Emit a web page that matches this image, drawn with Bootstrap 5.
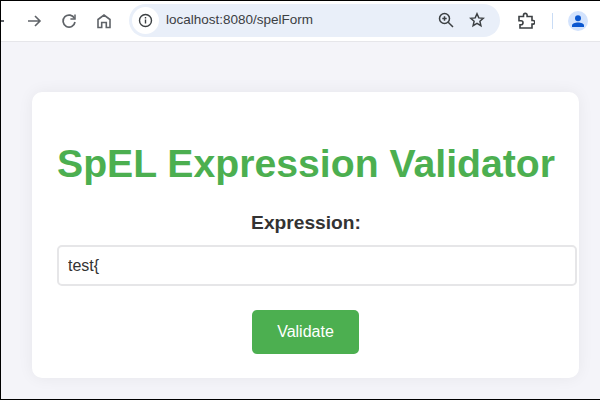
<!DOCTYPE html>
<html lang="en">
<head>
  <meta charset="UTF-8" />
  <meta name="viewport" content="width=device-width, initial-scale=1" />
  <title>SpEL Expression Validator</title>
  <link href="https://cdn.jsdelivr.net/npm/bootstrap@5.3.3/dist/css/bootstrap.min.css" rel="stylesheet" />
  <style>
    html, body { height: 400px; overflow: hidden; }
    body {
      background-color: #f4f4f9;
      color: #333;
      font-family: "Liberation Sans", Arial, sans-serif;
    }
    .shot-frame {
      height: 400px;
      border-top: 1px solid #000;
      border-left: 1px solid #000;
      border-bottom: 1px solid #000;
      overflow: hidden;
    }
    .chrome-bar {
      height: 41px;
      background-color: #fff;
      border-bottom: 1px solid #e6e6ea;
    }
    .chrome-bar svg { display: block; flex: none; }
    .back-tip { width: 3px; height: 1.5px; background-color: #5f6368; flex: none; }
    .nav-icons { gap: 17px; width: 125px; padding-left: 21px; flex: none; }
    .omnibox {
      width: 371px;
      height: 33px;
      flex: none;
      margin-top: -2px;
      background-color: #e9eff9;
      border-radius: 17px;
      padding: 0 15px 0 3px;
    }
    .info-dot {
      width: 27px;
      height: 27px;
      background-color: #fff;
      border-radius: 50%;
      flex: none;
    }
    .url-text { font-size: 13.500px; color: #3c4043; margin-left: 7px; }
    .url-icons { gap: 15px; }
    .ext-icon { margin-left: 17px; }
    .toolbar-sep { width: 1px; height: 16px; background-color: #c9dcf5; margin: 0 15px 0 17px; flex: none; }
    .avatar {
      width: 20px;
      height: 20px;
      background-color: #d3e3fd;
      border-radius: 50%;
      flex: none;
    }
    .form-card {
      width: 547px;
      height: 286px;
      margin: 50px 0 0 31px;
      padding: 50px 2px 0 25px;
      background-color: #fff;
      border-radius: 10px;
      box-shadow: 0 0 16px rgba(0, 0, 0, 0.06);
    }
    .form-card h1 {
      font-family: "Liberation Sans", Arial, sans-serif;
      font-size: 39.200px;
      font-weight: 700;
      line-height: 44px;
      color: #4caf50;
      margin: 0;
      white-space: nowrap;
      padding-right: 22px;
    }
    .expr-label {
      font-size: 19.200px;
      font-weight: 700;
      line-height: 24px;
      margin: 25px 0 10px;
      padding-right: 22px;
    }
    .expr-input.form-control {
      height: 41px;
      padding: 0 9px;
      font-size: 16px;
      color: #333;
      border: 2px solid #e6e6e8;
      border-radius: 5px;
    }
    .validate-btn.btn {
      width: 107px;
      height: 44px;
      margin: 24px 23px 0 0;
      font-size: 16px;
      color: #fff;
      background-color: #4caf50;
      border: 0;
      border-radius: 5px;
    }
  </style>
</head>
<body>
  <div class="shot-frame">
    <!-- Browser toolbar -->
    <div class="chrome-bar d-flex align-items-center">
      <span class="back-tip"></span>
      <div class="nav-icons d-flex align-items-center">
        <svg width="18" height="18" viewBox="0 0 18 18" fill="none" stroke="#5f6368" stroke-width="1.600"><path d="M3 9h12M10 4l5 5-5 5"/></svg>
        <svg width="18" height="18" viewBox="0 0 18 18" fill="none" stroke="#5f6368" stroke-width="1.700"><path d="M14.500 6.500A6 6 0 1 0 15 10"/><path d="M15 2.500v4.600h-4.600" stroke-width="1.500"/></svg>
        <svg width="18" height="18" viewBox="0 0 18 18" fill="none" stroke="#5f6368" stroke-width="1.600"><path d="M3 7.500L9 3l6 4.500V15.500h-3.700v-5H6.700v5H3z"/></svg>
      </div>
      <div class="omnibox d-flex align-items-center">
        <span class="info-dot d-flex align-items-center justify-content-center">
          <svg width="15" height="15" viewBox="0 0 15 15" fill="none" stroke="#3c4043" stroke-width="1.400"><circle cx="7.500" cy="7.500" r="6"/><path d="M7.500 6.600v4M7.500 4v1.500"/></svg>
        </span>
        <span class="url-text flex-grow-1">localhost:8080/spelForm</span>
        <div class="url-icons d-flex align-items-center">
          <svg width="16" height="16" viewBox="0 0 16 16" fill="none" stroke="#3c4043" stroke-width="1.500"><circle cx="6.500" cy="6.500" r="5"/><path d="M10.200 10.200L15 15M4.300 6.500h4.400M6.500 4.300v4.400"/></svg>
          <svg width="16" height="16" viewBox="0 0 16 16" fill="none" stroke="#3c4043" stroke-width="1.500"><path d="M8 1.800l1.800 4.100 4.500.4-3.400 3 1 4.400L8 11.400l-3.900 2.300 1-4.400-3.400-3 4.500-.4z"/></svg>
        </div>
      </div>
      <svg class="ext-icon" width="18" height="18" viewBox="0 0 18 18" fill="none" stroke="#3c4043" stroke-width="1.600"><path d="M2 4.500h4.500V3.200a1.800 1.800 0 0 1 3.600 0V4.500h4.900v4h1a1.800 1.800 0 0 1 0 3.600h-1V16H3v-3.300h1a2 2 0 0 0 0-4H2z"/></svg>
      <span class="toolbar-sep"></span>
      <span class="avatar d-flex align-items-center justify-content-center">
        <svg width="14" height="14" viewBox="0 0 14 14" fill="#0b57d0"><circle cx="7" cy="4.200" r="3"/><path d="M1 13v-1.500C1 9.500 4 8.500 7 8.500s6 1 6 3V13z"/></svg>
      </span>
    </div>

    <!-- Page content -->
    <div class="form-card text-center">
      <h1>SpEL Expression Validator</h1>
      <form>
        <label class="expr-label d-block" for="expression">Expression:</label>
        <input id="expression" class="expr-input form-control" type="text" value="test{" />
        <button class="validate-btn btn" type="button">Validate</button>
      </form>
    </div>
  </div>
  <script src="https://cdn.jsdelivr.net/npm/bootstrap@5.3.3/dist/js/bootstrap.bundle.min.js"></script>
</body>
</html>
